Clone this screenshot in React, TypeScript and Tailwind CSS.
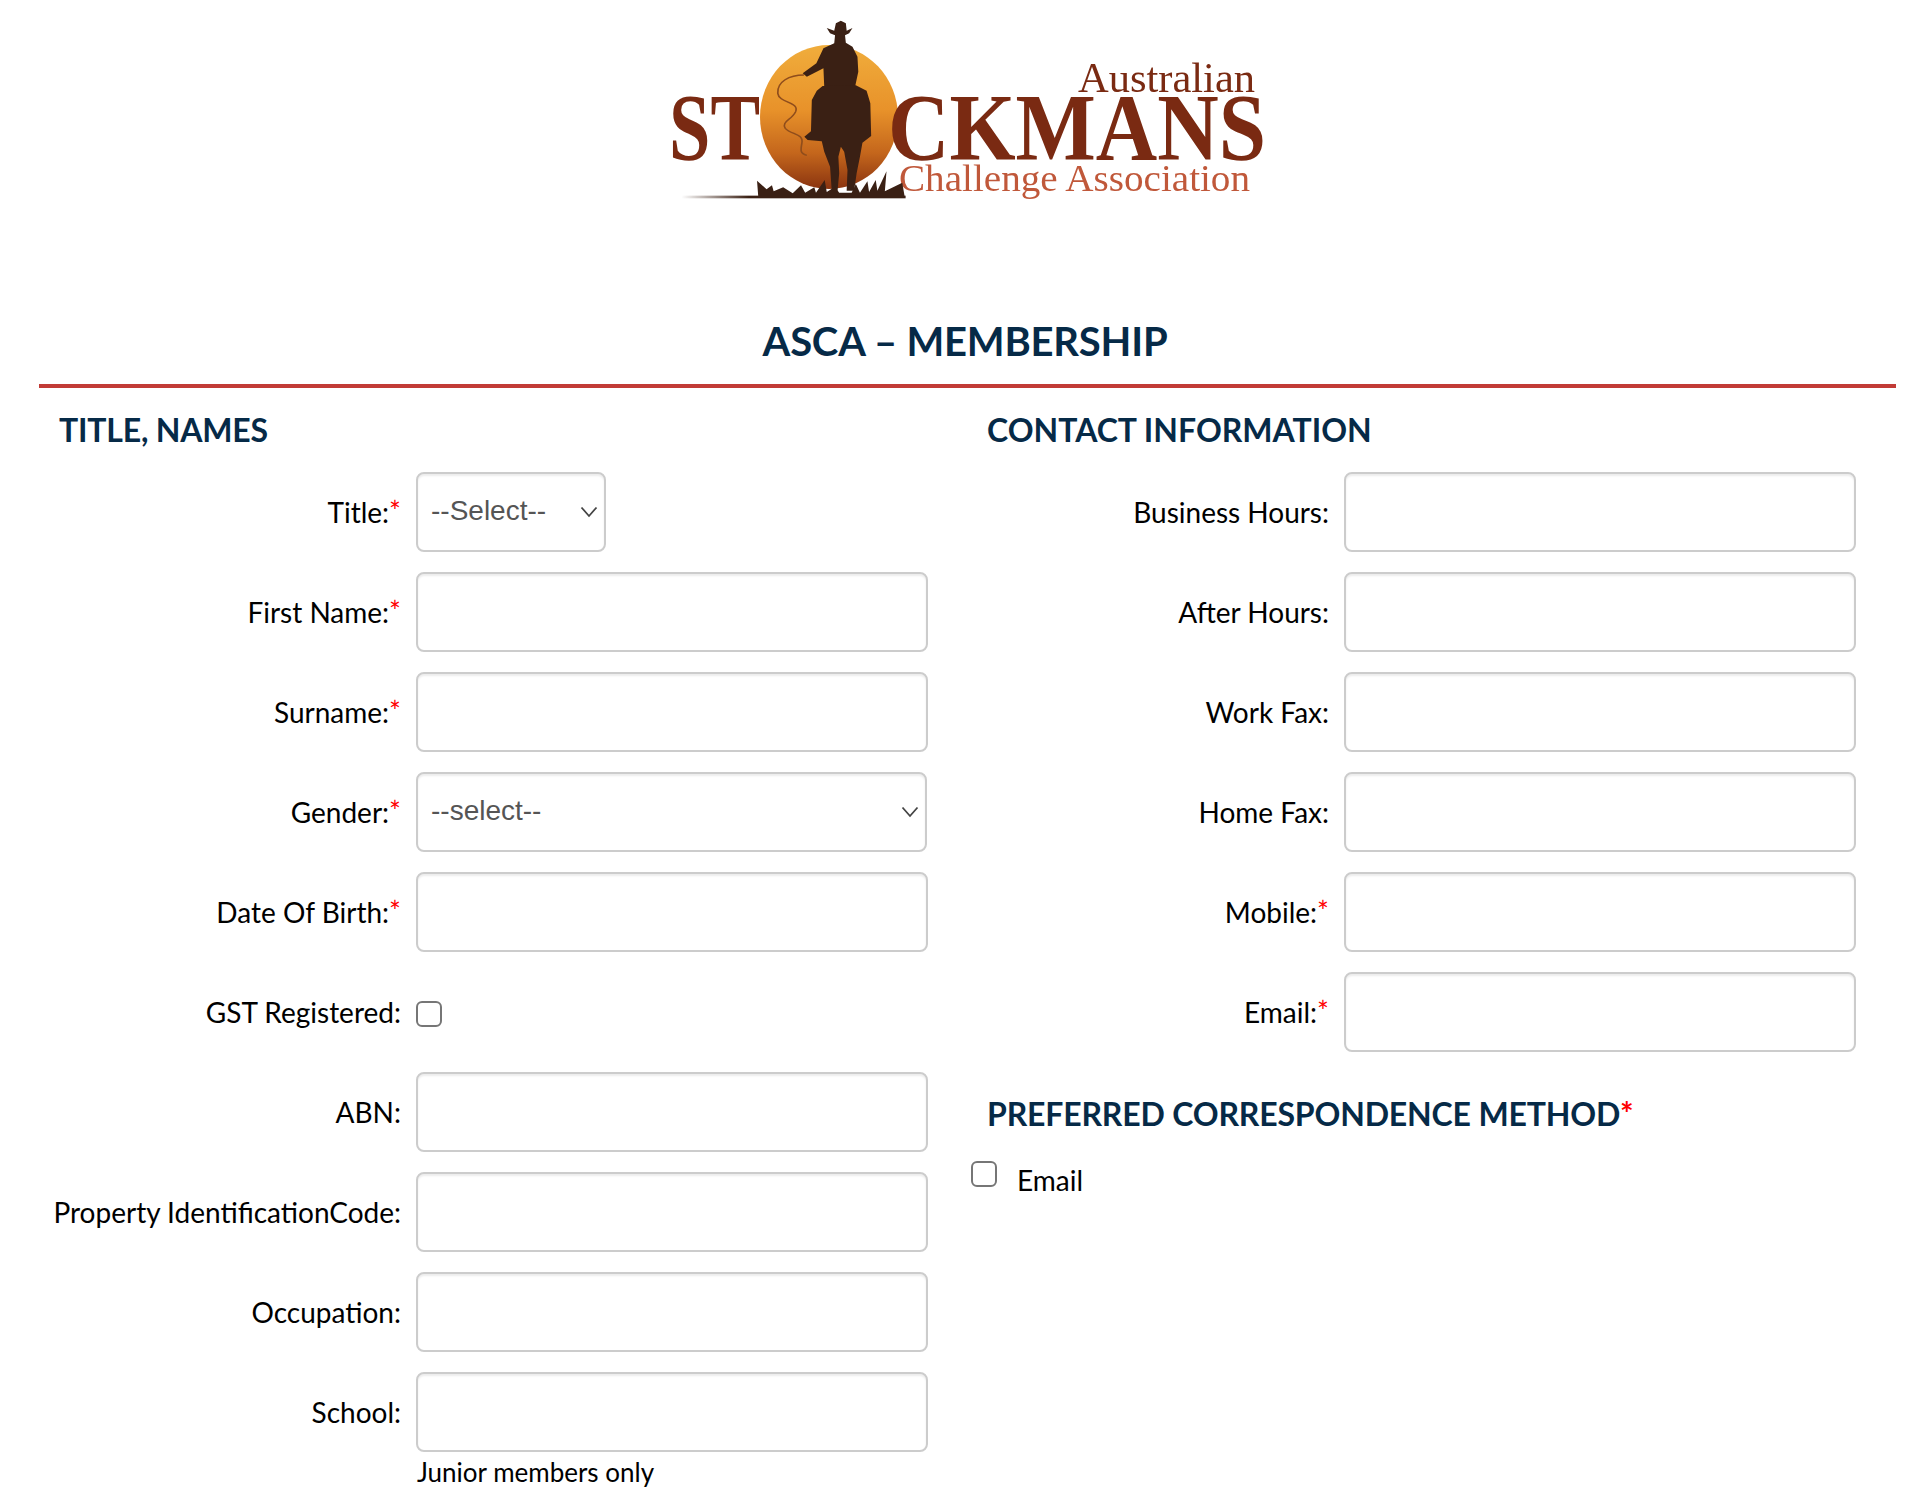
import React from "react";

const lato = { fontFamily: "Lato, 'Noto Sans', sans-serif" };

function Star() {
  return <span className="relative top-[-1px] text-[28px] leading-none text-[#ff0000]">*</span>;
}

function Logo() {
  return (
    <svg width="610" height="210" viewBox="660 0 610 210" className="block blur-[0.6px]">
      <defs>
        <linearGradient id="sun" x1="0" y1="0" x2="0" y2="1">
          <stop offset="0" stopColor="#f0ad3c" />
          <stop offset="0.45" stopColor="#e8922a" />
          <stop offset="0.75" stopColor="#c4661c" />
          <stop offset="1" stopColor="#8a3410" />
        </linearGradient>
        <linearGradient id="ground" x1="0" y1="0" x2="1" y2="0">
          <stop offset="0" stopColor="#3a2014" stopOpacity="0" />
          <stop offset="0.3" stopColor="#3a2014" />
          <stop offset="1" stopColor="#3a2014" />
        </linearGradient>
      </defs>
      <ellipse cx="829" cy="117" rx="69" ry="72" fill="url(#sun)" />
      <g fontFamily="'Liberation Serif', serif">
        <text x="669" y="160" fontSize="95" fontWeight="700" fill="#7a2a12" textLength="91" lengthAdjust="spacingAndGlyphs">ST</text>
        <text x="888" y="160" fontSize="95" fontWeight="700" fill="#7a2a12" textLength="378" lengthAdjust="spacingAndGlyphs">CKMANS</text>
        <text x="1078" y="92" fontSize="43" fill="#7a2a12" textLength="177" lengthAdjust="spacingAndGlyphs">Australian</text>
        <text x="899" y="191" fontSize="37" fill="#c0583a" textLength="351" lengthAdjust="spacingAndGlyphs">Challenge Association</text>
      </g>
      <g transform="translate(640 0) scale(0.415 0.3333)">
        <path d="M395 225 C360 225 330 245 332 280 C335 310 385 305 375 335 C365 360 340 365 350 385 C365 405 395 400 390 430 C387 450 385 460 402 466" fill="none" stroke="#8f4d1c" strokeWidth="4" />
        {/* hat, head, rider's body and whip arm */}
        <path
          fill="#3a2014"
          d="M450 84 L468 92 L472 70 L484 62 L496 70 L498 92 L512 84 L504 100 L494 106 L496 128 L512 140 L524 170 L526 215 L518 262 L444 262 L442 205 L402 230 L392 220 L425 190 L442 145 L468 130 L470 106 L458 100 Z"
        />
        {/* horse from behind, with legs parted */}
        <path
          fill="#3a2014"
          d="M440 258 L520 256 L546 272 L555 310 L557 408 L536 428 L530 470 L522 520 L516 572 L498 572 L500 510 L492 455 L484 440 L478 470 L480 520 L476 572 L462 572 L458 500 L444 455 L438 424 L404 420 L396 410 L412 394 L414 300 L426 272 Z"
        />
        {/* grass */}
        <path
          fill="#3a2014"
          d="M285 590 L282 542 L305 568 L318 556 L322 574 L345 562 L368 580 L388 556 L398 578 L420 562 L424 578 L445 540 L450 576 L470 560 L480 578 L510 578 L520 552 L530 578 L548 544 L552 576 L568 540 L572 572 L594 514 L590 574 L632 548 L638 592 Z"
        />
        <rect x="100" y="587" width="540" height="8" fill="url(#ground)" />
      </g>
    </svg>
  );
}

function Chevron() {
  return (
    <svg width="18" height="12" viewBox="0 0 18 12" className="pointer-events-none absolute right-[8px] top-1/2 -translate-y-1/2">
      <path d="M1.5 1.5 L9 10 L16.5 1.5" fill="none" stroke="#444" strokeWidth="1.8" />
    </svg>
  );
}

function Label({ text, req }: { text: string; req?: boolean }) {
  return (
    <label className="w-[362px] shrink-0 text-right text-[28px] leading-[40px] text-black">
      {text}
      {req && <Star />}
    </label>
  );
}

const box =
  "h-[80px] rounded-[8px] border-2 border-[#cccccc] bg-white shadow-[inset_0_2px_2px_rgba(0,0,0,0.075)]";

function TextRow({ label, req }: { label: string; req?: boolean }) {
  return (
    <div className="flex items-center gap-[15px]">
      <Label text={label} req={req} />
      <input type="text" className={`${box} w-[512px] outline-none`} />
    </div>
  );
}

function SelectRow({ label, value, width }: { label: string; value: string; width: string }) {
  return (
    <div className="flex items-center gap-[15px]">
      <Label text={label} req />
      <div className={`relative ${width}`}>
        <select
          className={`${box} w-full appearance-none pl-[13px] pb-[2px] text-[28px] text-[#555555] outline-none`}
          style={{ fontFamily: "'Liberation Sans', Arial, sans-serif" }}
          defaultValue={value}
        >
          <option>{value}</option>
        </select>
        <Chevron />
      </div>
    </div>
  );
}

const check =
  "h-[26px] w-[26px] appearance-none rounded-[6px] border-2 border-[#767676] bg-white";

const sectionHeading = "ml-[20px] text-[32px] font-bold leading-[50px] text-[#062a47]";

export default function App() {
  return (
    <div className="h-[1500px] w-[1930px] overflow-hidden bg-white" style={lato}>
      <div className="flex justify-center">
        <Logo />
      </div>
      <h1 className="mt-[106px] text-center text-[40px] font-bold leading-[50px] tracking-[-0.2px] text-[#062a47]">
        ASCA – MEMBERSHIP
      </h1>
      <div className="mx-[39px] mt-[18px] h-[4px] w-[1857px] bg-[#c23b36]" />
      <div className="mx-[39px] mt-[17px] grid w-[1857px] grid-cols-[928px_929px]">
        <div>
          <h2 className={`${sectionHeading} h-[67px] tracking-[-0.2px]`}>TITLE, NAMES</h2>
          <div className="flex flex-col gap-[20px]">
            <SelectRow label="Title:" value="--Select--" width="w-[190px]" />
            <TextRow label="First Name:" req />
            <TextRow label="Surname:" req />
            <SelectRow label="Gender:" value="--select--" width="w-[511px]" />
            <TextRow label="Date Of Birth:" req />
            <div className="flex h-[80px] items-center gap-[15px]">
              <Label text="GST Registered:" />
              <input type="checkbox" className={`${check} mt-[4px]`} />
            </div>
            <TextRow label="ABN:" />
            <TextRow label="Property IdentificationCode:" />
            <TextRow label="Occupation:" />
            <TextRow label="School:" />
          </div>
          <p className="ml-[378px] mt-[2px] text-[26px] leading-[36px] text-black">Junior members only</p>
        </div>
        <div>
          <h2 className={`${sectionHeading} h-[67px]`}>CONTACT INFORMATION</h2>
          <div className="flex flex-col gap-[20px]">
            <TextRow label="Business Hours:" />
            <TextRow label="After Hours:" />
            <TextRow label="Work Fax:" />
            <TextRow label="Home Fax:" />
            <TextRow label="Mobile:" req />
            <TextRow label="Email:" req />
          </div>
          <h2 className={`${sectionHeading} mt-[37px] tracking-[-0.17px]`}>
            PREFERRED CORRESPONDENCE METHOD
            <span className="text-[#ff0000]">*</span>
          </h2>
          <div className="ml-[4px] mt-[22px] flex items-start gap-[20px]">
            <input type="checkbox" className={check} />
            <span className="mt-[-1px] text-[28px] leading-[40px] text-black">Email</span>
          </div>
        </div>
      </div>
    </div>
  );
}
